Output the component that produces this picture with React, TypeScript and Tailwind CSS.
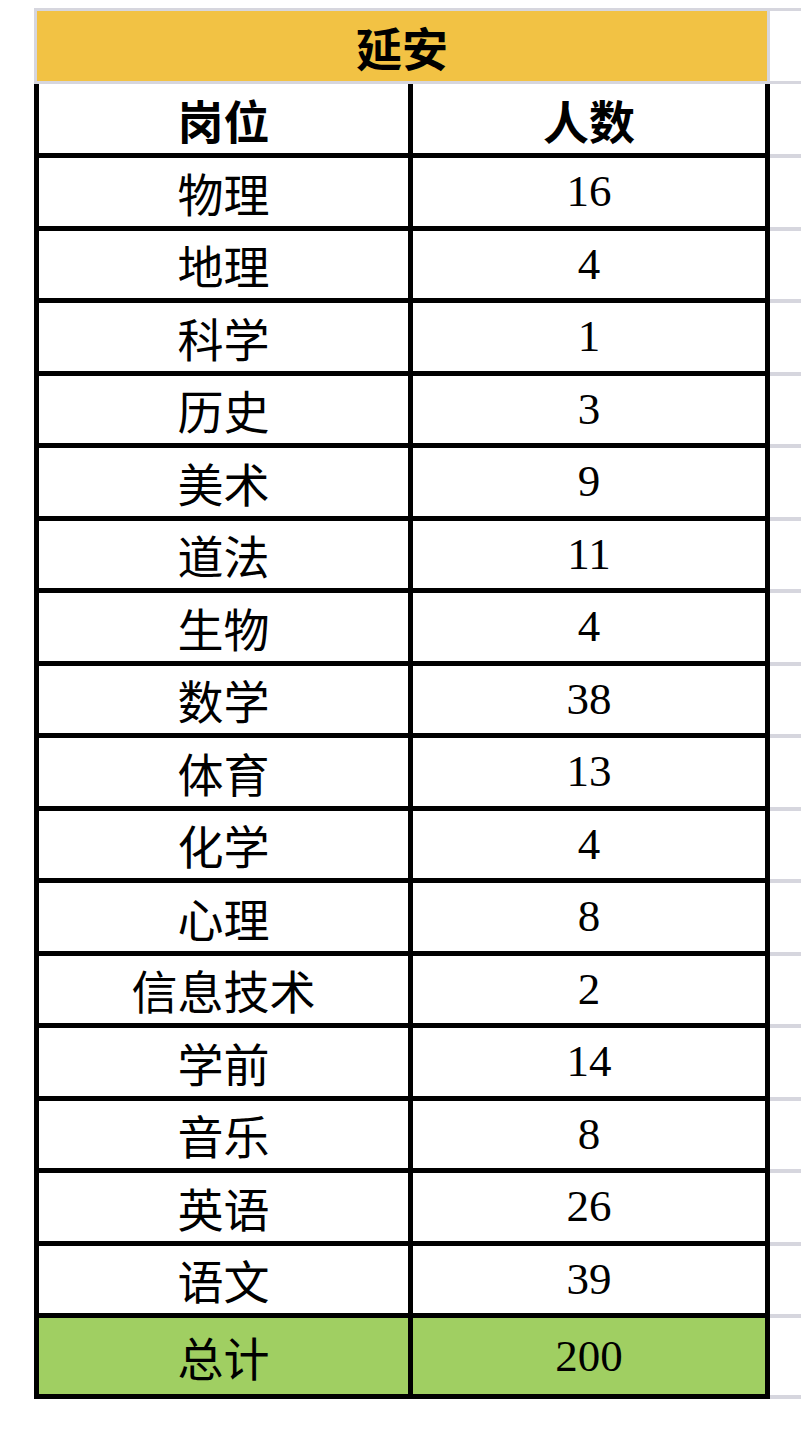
import React from "react";

const rows: [string, string][] = [
  ["物理", "16"],
  ["地理", "4"],
  ["科学", "1"],
  ["历史", "3"],
  ["美术", "9"],
  ["道法", "11"],
  ["生物", "4"],
  ["数学", "38"],
  ["体育", "13"],
  ["化学", "4"],
  ["心理", "8"],
  ["信息技术", "2"],
  ["学前", "14"],
  ["音乐", "8"],
  ["英语", "26"],
  ["语文", "39"],
];

const cjk = { fontFamily: '"Noto Sans CJK SC", "Noto Sans", sans-serif' };
const serif = { fontFamily: '"Liberation Serif", "Times New Roman", serif' };

function Row({
  name,
  value,
  h,
  bold,
  bg,
}: {
  name: string;
  value: string;
  h: string;
  bold?: boolean;
  bg: string;
}) {
  return (
    <div className="flex">
      <div className={`flex w-[736px] border-x-[5px] border-b-[5px] border-black ${bg} ${h}`}>
        <div
          className={`flex w-[374px] items-center justify-center border-r-[5px] border-black text-[46px] leading-none text-black ${bold ? "font-bold" : "font-normal"}`}
          style={cjk}
        >
          {name}
        </div>
        <div
          className={`flex flex-1 items-center justify-center leading-none text-black ${bold ? "text-[46px] font-bold" : "text-[45px] font-normal"}`}
          style={bold ? cjk : serif}
        >
          {value}
        </div>
      </div>
      <div className={`flex-1 border-b-[4px] border-[#d6d6de] ${h}`} />
    </div>
  );
}

export default function App() {
  return (
    <div className="min-h-[1445px] w-[801px] bg-white pl-[34px] pt-[8px]">
      <div className="flex">
        <div
          className="flex h-[76px] w-[736px] items-center justify-center border-[3px] border-[#d6d6de] bg-[#f2c244] text-[46px] font-bold leading-none text-black"
          style={cjk}
        >
          延安
        </div>
        <div className="h-[76px] flex-1 border-y-[3px] border-[#d6d6de]" />
      </div>
      <Row name="岗位" value="人数" h="h-[74px]" bold bg="bg-white" />
      {rows.map(([n, v]) => (
        <Row key={n} name={n} value={v} h="h-[72.5px]" bg="bg-white" />
      ))}
      <Row name="总计" value="200" h="h-[81px]" bg="bg-[#a0cf62]" />
    </div>
  );
}
